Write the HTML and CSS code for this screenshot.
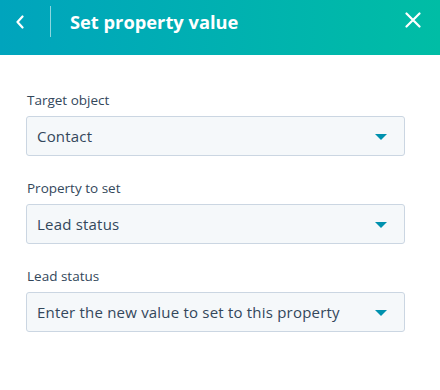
FILE: index.html
```html
<!DOCTYPE html>
<html>
<head>
<meta charset="utf-8">
<link rel="stylesheet" href="styles.css">
</head>
<body>
<div class="panel">
  <header class="header">
    <button class="back" aria-label="Back">
      <svg width="10" height="14" viewBox="0 0 10 14"><path d="M7.5 1.5 L2.5 7 L7.5 12.5" fill="none" stroke="#fff" stroke-width="2.2" stroke-linecap="round" stroke-linejoin="round"/></svg>
    </button>
    <span class="divider"></span>
    <h1 class="title">Set property value</h1>
    <button class="close" aria-label="Close">
      <svg width="16" height="16" viewBox="0 0 16 16"><path d="M1.5 1.5 L14.5 14.5 M14.5 1.5 L1.5 14.5" fill="none" stroke="#fff" stroke-width="2.2" stroke-linecap="round"/></svg>
    </button>
  </header>
  <main class="form">
    <div class="field">
      <label class="label">Target object</label>
      <div class="select"><span class="value">Contact</span><span class="caret"></span></div>
    </div>
    <div class="field">
      <label class="label">Property to set</label>
      <div class="select"><span class="value">Lead status</span><span class="caret"></span></div>
    </div>
    <div class="field">
      <label class="label">Lead status</label>
      <div class="select"><span class="value">Enter the new value to set to this property</span><span class="caret"></span></div>
    </div>
  </main>
</div>
</body>
</html>
```
FILE: styles.css
```css
html, body {
  margin: 0;
  padding: 0;
  background: #fff;
}
body {
  font-family: "Open Sans", "Lato", sans-serif;
  color: #33475b;
  width: 440px;
  height: 390px;
  overflow: hidden;
}
.header {
  display: flex;
  align-items: center;
  height: 43px;
  padding-bottom: 12px;
  background: linear-gradient(90deg, #00a4bd 0%, #00bda5 100%);
}
.back, .close {
  background: none;
  border: 0;
  padding: 0;
  display: flex;
  align-items: center;
  justify-content: center;
  cursor: pointer;
}
.back {
  width: 40px;
  height: 43px;
}
.divider {
  width: 1px;
  height: 31px;
  background: rgba(255, 255, 255, 0.55);
  margin-left: 10px;
}
.title {
  margin: 0 0 0 19px;
  font-size: 18.3px;
  font-weight: 700;
  color: #fff;
  flex: 1;
}
.close {
  width: 16px;
  height: 16px;
  margin-right: 19px;
  margin-top: -4px;
}
.form {
  padding: 35px 35px 0 26px;
  display: flex;
  flex-direction: column;
  gap: 22px;
}
.field {
  display: flex;
  flex-direction: column;
  gap: 6px;
}
.label {
  font-size: 13.5px;
  line-height: 20px;
  padding-left: 1px;
}
.select {
  height: 38px;
  border: 1px solid #cbd6e2;
  border-radius: 3px;
  background: #f5f8fa;
  display: flex;
  align-items: center;
  justify-content: space-between;
  padding: 0 17px 0 10px;
}
.value {
  font-size: 15px;
  letter-spacing: 0.2px;
  color: #33475b;
}
.caret {
  width: 0;
  height: 0;
  border-left: 6px solid transparent;
  border-right: 6px solid transparent;
  border-top: 6px solid #0091ae;
  margin-top: 1px;
}
```
